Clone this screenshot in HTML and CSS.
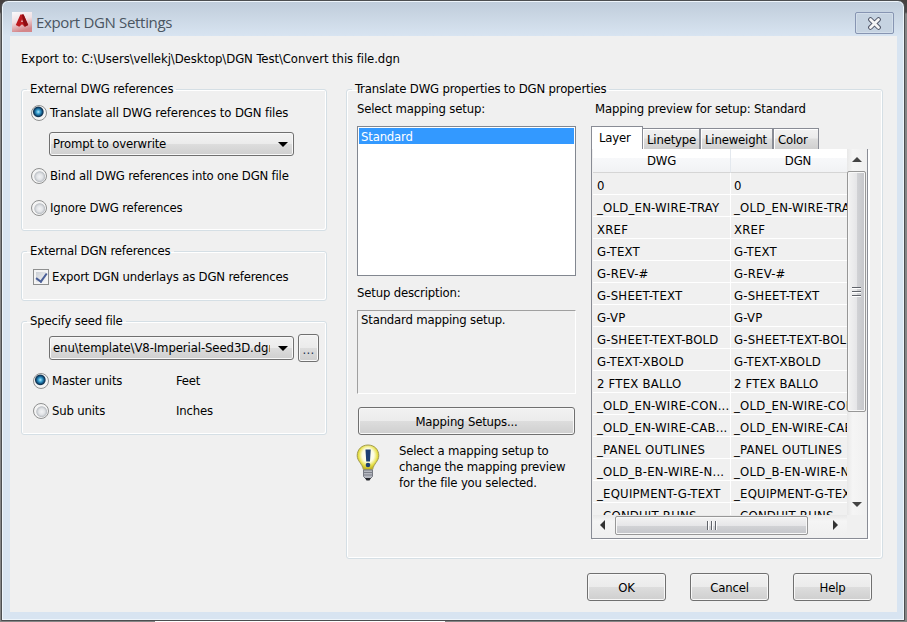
FILE: index.html
```html
<!DOCTYPE html>
<html lang="en">
<head>
    <meta charset="UTF-8">
    <meta name="viewport" content="width=device-width, initial-scale=1.0">
    <title>Export DGN Settings</title>
    <link rel="stylesheet" href="styles.css">
</head>
<body>
    <div class="window">
        <div class="title-bar">
            <svg class="app-icon" width="20" height="20" viewBox="0 0 20 20">
                <defs>
                    <linearGradient id="iconBg" x1="0" y1="0" x2="0.3" y2="1">
                        <stop offset="0" stop-color="#fafafc"/>
                        <stop offset="0.5" stop-color="#f0e0e3"/>
                        <stop offset="1" stop-color="#d4868a"/>
                    </linearGradient>
                </defs>
                <rect width="20" height="20" fill="url(#iconBg)"/>
                <path d="M8.400 2.500h3.200L16.200 13l-3.400 1.800-2.800-2.600-2.800 2.600L3.800 13z" fill="#bd1a1f"/>
                <path d="M10 2.500h1.600L16.200 13l-3.400 1.800-1.600-4.500z" fill="#8d0d12"/>
                <path d="M10 7.300l1 2.700H9z" fill="#e9b5b8"/>
            </svg>
            <h1 class="title">Export DGN Settings</h1>
            <button class="close-btn" type="button" aria-label="Close">
                <svg width="15" height="13" viewBox="0 0 15 13">
                    <path d="M3.500 2.600l8 7.800M11.500 2.600l-8 7.800" stroke="#505668" stroke-width="4.800" stroke-linecap="round"/>
                    <path d="M3.500 2.600l8 7.800M11.500 2.600l-8 7.800" stroke="#f6f6f6" stroke-width="2.800" stroke-linecap="round"/>
                </svg>
            </button>
        </div>

        <form class="client">
            <p class="export-path">Export to: C:\Users\vellekj\Desktop\DGN Test\Convert this file.dgn</p>

            <div class="columns">
                <div class="left">
                    <fieldset class="group dwg-group">
                        <legend>External DWG references</legend>
                        <label class="option"><input type="radio" name="dwg" checked><span>Translate all DWG references to DGN files</span></label>
                        <div class="combo"><span class="combo-text">Prompt to overwrite</span><span class="combo-arrow"></span></div>
                        <label class="option"><input type="radio" name="dwg"><span>Bind all DWG references into one DGN file</span></label>
                        <label class="option"><input type="radio" name="dwg"><span>Ignore DWG references</span></label>
                    </fieldset>

                    <fieldset class="group dgn-group">
                        <legend>External DGN references</legend>
                        <label class="option"><input type="checkbox" checked><span>Export DGN underlays as DGN references</span></label>
                    </fieldset>

                    <fieldset class="group seed-group">
                        <legend>Specify seed file</legend>
                        <div class="seed-row">
                            <div class="combo"><span class="combo-text">enu\template\V8-Imperial-Seed3D.dgn</span><span class="combo-arrow"></span></div>
                            <button class="btn browse" type="button">...</button>
                        </div>
                        <div class="unit-row">
                            <label class="option"><input type="radio" name="units" checked><span>Master units</span></label>
                            <span>Feet</span>
                        </div>
                        <div class="unit-row">
                            <label class="option"><input type="radio" name="units"><span>Sub units</span></label>
                            <span>Inches</span>
                        </div>
                    </fieldset>
                </div>

                <fieldset class="group mapping-group">
                    <legend>Translate DWG properties to DGN properties</legend>
                    <div class="mapping">
                        <div class="setup">
                            <p class="label">Select mapping setup:</p>
                            <ul class="setup-list">
                                <li class="selected">Standard</li>
                            </ul>
                            <p class="label">Setup description:</p>
                            <div class="description">Standard mapping setup.</div>
                            <button class="btn setups-btn" type="button">Mapping Setups...</button>
                            <div class="hint">
                                <svg class="bulb" width="24" height="37" viewBox="0 0 24 37">
                                    <defs>
                                        <radialGradient id="glass" cx="0.5" cy="0.42" r="0.55">
                                            <stop offset="0" stop-color="#ffffff"/>
                                            <stop offset="0.5" stop-color="#fdfde0"/>
                                            <stop offset="0.8" stop-color="#e6df45"/>
                                            <stop offset="1" stop-color="#c2b523"/>
                                        </radialGradient>
                                    </defs>
                                    <path d="M12 1C5.600 1 1.200 5.600 1.200 11.600c0 5.600 5 7.900 6.200 14h9.200c1.200-6.100 6.200-8.400 6.200-14C22.800 5.600 18.400 1 12 1z" fill="url(#glass)" stroke="#a19b52"/>
                                    <path d="M9.500 5.500h5.200L14 17.500h-3.800z" fill="#1d3f73"/>
                                    <circle cx="12" cy="21" r="2.300" fill="#1d3f73"/>
                                    <path d="M7.500 26h9v6.500l-2 2h-5l-2-2z" fill="#b5b8c0" stroke="#777a82"/>
                                    <path d="M7.500 28.500h9M7.500 31h9" stroke="#7c7f88"/>
                                    <path d="M9 34h6l-1.500 2.500h-3z" fill="#25272c"/>
                                </svg>
                                <p>Select a mapping setup to change the mapping preview for the file you selected.</p>
                            </div>
                        </div>

                        <div class="preview">
                            <p class="label">Mapping preview for setup: Standard</p>
                            <div class="tabs">
                                <span class="tab active">Layer</span>
                                <span class="tab linetype">Linetype</span>
                                <span class="tab lineweight">Lineweight</span>
                                <span class="tab color">Color</span>
                            </div>
                            <div class="grid-panel">
                                <div class="table-view">
                                    <table>
                                        <thead>
                                            <tr><th class="first">DWG</th><th>DGN</th></tr>
                                        </thead>
                                        <tbody>
                                            <tr><td>0</td><td>0</td></tr>
                                            <tr><td>_OLD_EN-WIRE-TRAY</td><td>_OLD_EN-WIRE-TRAY</td></tr>
                                            <tr><td>XREF</td><td>XREF</td></tr>
                                            <tr><td>G-TEXT</td><td>G-TEXT</td></tr>
                                            <tr><td>G-REV-#</td><td>G-REV-#</td></tr>
                                            <tr><td>G-SHEET-TEXT</td><td>G-SHEET-TEXT</td></tr>
                                            <tr><td>G-VP</td><td>G-VP</td></tr>
                                            <tr><td>G-SHEET-TEXT-BOLD</td><td>G-SHEET-TEXT-BOLD</td></tr>
                                            <tr><td>G-TEXT-XBOLD</td><td>G-TEXT-XBOLD</td></tr>
                                            <tr><td>2 FTEX BALLO</td><td>2 FTEX BALLO</td></tr>
                                            <tr><td>_OLD_EN-WIRE-CON...</td><td>_OLD_EN-WIRE-CON...</td></tr>
                                            <tr><td>_OLD_EN-WIRE-CAB...</td><td>_OLD_EN-WIRE-CAB...</td></tr>
                                            <tr><td>_PANEL OUTLINES</td><td>_PANEL OUTLINES</td></tr>
                                            <tr><td>_OLD_B-EN-WIRE-N...</td><td>_OLD_B-EN-WIRE-N...</td></tr>
                                            <tr><td>_EQUIPMENT-G-TEXT</td><td>_EQUIPMENT-G-TEXT</td></tr>
                                            <tr><td>_CONDUIT RUNS</td><td>_CONDUIT RUNS</td></tr>
                                        </tbody>
                                    </table>
                                </div>
                                <div class="scroll-v">
                                    <span class="arrow up"></span>
                                    <span class="thumb"><i></i><i></i><i></i></span>
                                    <span class="arrow down"></span>
                                </div>
                                <div class="scroll-h">
                                    <span class="arrow prev"></span>
                                    <span class="thumb"><i></i><i></i><i></i></span>
                                    <span class="arrow next"></span>
                                </div>
                            </div>
                        </div>
                    </div>
                </fieldset>
            </div>

            <div class="actions">
                <button class="btn" type="button">OK</button>
                <button class="btn" type="button">Cancel</button>
                <button class="btn" type="button">Help</button>
            </div>
        </form>
    </div>
    <div class="page-behind"></div>
</body>
</html>
```

FILE: styles.css
```css
* {
    margin: 0;
    padding: 0;
    box-sizing: border-box;
}

body {
    width: 907px;
    height: 622px;
    overflow: hidden;
    padding-left: 1px;
    background: linear-gradient(#45403f 0, #4b4848 12px, #858585 14px, #858585 100%);
    font-family: Tahoma, "DejaVu Sans Condensed", "DejaVu Sans", sans-serif;
    font-size: 13px;
    line-height: 16px;
    letter-spacing: -0.18px;
    color: #000;
}

.window {
    width: 904px;
    height: 621px;
    padding: 0 7px 7px;
    border: 1px solid #4c4e50;
    border-radius: 7px 7px 0 0;
    background: linear-gradient(#bfccda 0, #d8e4f1 35px, #d8e4f1 100%);
    box-shadow: inset 0 0 0 1px #eef5fb;
}

.title-bar {
    display: flex;
    align-items: flex-start;
    height: 35px;
    padding: 11px 3px 0 3px;
}

.title {
    flex: 1;
    margin-left: 4px;
    font-family: "Segoe UI", "Open Sans", "Noto Sans", sans-serif;
    font-size: 15px;
    font-weight: 400;
    line-height: 20px;
    letter-spacing: -0.33px;
    color: #4a5561;
}

.close-btn {
    display: flex;
    align-items: center;
    justify-content: center;
    width: 39px;
    height: 22px;
    border: 1px solid #8795b2;
    border-radius: 2px;
    background: #c6d3e1;
    box-shadow: inset 0 0 0 1px #d3deea;
}

.client {
    height: 576px;
    margin-left: 1px;
    padding: 15px 14px 0 11px;
    background: #f0f0f0;
}

.export-path {
    margin-bottom: 14px;
    letter-spacing: -0.08px;
}

.columns {
    display: flex;
    justify-content: space-between;
}

.left {
    width: 306px;
}

.group {
    display: flow-root;
    min-width: 0;
    border: 1px solid #d5dfe5;
    border-radius: 3px;
    box-shadow: inset 1px 1px 0 #fff, inset -1px -1px 0 #fff;
}

.group legend {
    height: 16px;
    margin-left: -4px;
    padding: 0 3px;
}

.dwg-group {
    height: 150px;
    margin-bottom: 12px;
    padding-left: 9px;
}

.dgn-group {
    height: 58px;
    margin-bottom: 12px;
    padding: 10px 0 0 11px;
}

.seed-group {
    height: 122px;
    padding: 5px 0 0 11px;
}

.dgn-group legend,
.seed-group legend {
    margin-left: -6px;
}

.option {
    display: flex;
    align-items: center;
    gap: 3px;
    height: 16px;
}

.dwg-group .option {
    margin-top: 16px;
}

.dwg-group legend + .option {
    margin-top: 8px;
    letter-spacing: -0.11px;
}

.dwg-group .combo {
    margin: 11px 0 9px 18px;
}

.dwg-group .combo + .option {
    margin-top: 0;
    padding-top: 0;
}

.dwg-group .combo {
    margin-bottom: 12px;
}

input {
    appearance: none;
    width: 16px;
    height: 16px;
}

input[type="radio"] {
    border: 1px solid #8e8f8f;
    border-radius: 50%;
    background: radial-gradient(circle at 55% 55%, #f2f3f5 0, #e2e4e7 3px, #bfc3c8 5px, #f4f4f4 5.800px);
}

input[type="radio"]:checked {
    background: radial-gradient(circle at 45% 42%, #b5e8fb 0, #38a0d0 2px, #0b3f69 4.300px, #163550 4.800px, #f4f4f4 5.800px);
}

input[type="checkbox"] {
    border: 1px solid #8e8f8f;
    background: linear-gradient(135deg, #cbcfd5, #f6f6f6) center / 10px 10px no-repeat #f4f4f4;
    display: flex;
    align-items: center;
    justify-content: center;
}

input[type="checkbox"]::after {
    content: "";
    width: 5px;
    height: 9px;
    margin-top: -2px;
    border: solid #4a5f97;
    border-width: 0 2px 2px 0;
    transform: rotate(36deg);
}

.combo {
    display: flex;
    align-items: center;
    width: 245px;
    height: 24px;
    padding: 0 5px 0 3px;
    border: 1px solid #707070;
    border-radius: 3px;
    background: linear-gradient(#f2f2f2 0, #ebebeb 50%, #dddddd 50%, #cfcfcf 100%);
    box-shadow: inset 0 0 0 1px #f8f8f8;
}

.combo-text {
    width: 217px;
    overflow: hidden;
    white-space: nowrap;
}

.seed-row .combo-text {
    letter-spacing: -0.1px;
}

.combo-arrow {
    margin-left: auto;
    border: 5px solid transparent;
    border-top-color: #000;
    border-bottom: 0;
}

.btn {
    border: 1px solid #707070;
    border-radius: 3px;
    background: linear-gradient(#f2f2f2 0, #ebebeb 50%, #dddddd 50%, #cfcfcf 100%);
    box-shadow: inset 0 0 0 1px #f8f8f8;
    font: inherit;
    letter-spacing: inherit;
}

.seed-row {
    display: flex;
    align-items: center;
    gap: 4px;
    margin-left: 16px;
}

.browse {
    width: 21px;
    height: 28px;
    padding-top: 4px;
    color: #1c3350;
    letter-spacing: 0.3px;
}

.unit-row {
    display: flex;
    margin-top: 11px;
}

.unit-row + .unit-row {
    margin-top: 14px;
}

.unit-row .option {
    width: 143px;
}

.mapping-group {
    width: 537px;
    height: 478px;
    padding: 4px 0 0 10px;
}

.mapping-group legend {
    margin-left: -5px;
}

.mapping {
    display: flex;
}

.setup {
    width: 234px;
}

.setup-list {
    width: 219px;
    height: 150px;
    margin: 9px 0;
    padding: 1px;
    border: 1px solid #828790;
    background: #fff;
    list-style: none;
}

.setup-list .selected {
    height: 16px;
    padding-left: 2px;
    background: #3399ff;
    line-height: 18px;
    color: #fff;
}

.description {
    width: 219px;
    height: 84px;
    margin-top: 9px;
    padding: 1px 3px;
    border: 1px solid;
    border-color: #a0a0a0 #fff #fff #a0a0a0;
}

.setups-btn {
    display: block;
    width: 217px;
    height: 28px;
    margin: 13px 0 8px 1px;
    padding-top: 1px;
}

.hint {
    display: flex;
    gap: 19px;
}

.bulb {
    flex: none;
    margin: 1px 0 0 -1px;
}

.hint p {
    width: 172px;
}

.preview .label {
    margin-left: 4px;
}

.tabs {
    display: flex;
    align-items: flex-end;
    height: 23px;
    margin-top: 9px;
}

.tab {
    height: 21px;
    padding: 3px 0 0 4px;
    border: 1px solid #898c95;
    border-bottom: 0;
    background: linear-gradient(#f2f2f2 0, #ebebeb 45%, #dddddd 50%, #cfcfcf 100%);
    box-shadow: inset 1px 1px 0 #fff;
}

.tab.active {
    width: 52px;
    height: 23px;
    padding-left: 7px;
    background: #fff;
}

.tab.linetype {
    width: 57px;
    border-left: 0;
}

.tab.lineweight {
    width: 73px;
}

.tab.color {
    width: 46px;
}

.grid-panel {
    display: grid;
    grid-template-columns: 254px 20px;
    grid-template-rows: 366px 20px;
    width: 277px;
    height: 390px;
    padding-left: 1px;
    border: 1px solid #898c95;
    border-top: 0;
    box-shadow: 2px 1px 0 #fff;
}

.table-view {
    overflow: hidden;
}

table {
    width: 273px;
    table-layout: fixed;
    border-collapse: separate;
    border-spacing: 0;
}

th {
    height: 24px;
    border-right: 1px solid #e3e8ee;
    border-bottom: 1px solid #d5d5d5;
    background: linear-gradient(#fff 0, #fff 40%, #f7f8fa 40%, #f1f2f4 100%);
    font-weight: 400;
}

th.first {
    width: 138px;
}

td {
    height: 22px;
    padding: 5px 0 0 4px;
    border-right: 1px solid #fff;
    border-bottom: 1px solid #fff;
    line-height: 16px;
    letter-spacing: 0.22px;
    white-space: nowrap;
}

td + td {
    padding-left: 3px;
}

.scroll-v {
    display: flex;
    flex-direction: column;
    align-items: center;
    width: 19px;
    background: linear-gradient(90deg, #e8e8e8, #f5f5f5 30%, #f0f0f0);
}

.thumb {
    display: flex;
    align-items: center;
    justify-content: center;
    gap: 2px;
    border: 1px solid #979797;
    border-radius: 2px;
    box-shadow: inset 0 0 0 1px #f8f8f8;
}

.scroll-v .thumb {
    flex-direction: column;
    width: 19px;
    height: 241px;
    background: linear-gradient(90deg, #f3f3f3 0, #e6e6e8 50%, #d2d3d6 50%, #c4c5c9 100%);
}

.scroll-v .thumb i {
    width: 9px;
    height: 2px;
    border-top: 1px solid #60636a;
    border-bottom: 1px solid #fff;
}

.scroll-h {
    display: flex;
    align-items: center;
    background: linear-gradient(#e8e8e8, #f5f5f5 30%, #f0f0f0);
}

.scroll-h .thumb {
    width: 193px;
    height: 19px;
    background: linear-gradient(#f3f3f3 0, #e6e6e8 50%, #d2d3d6 50%, #c4c5c9 100%);
}

.scroll-h .thumb i {
    width: 2px;
    height: 9px;
    border-left: 1px solid #60636a;
    border-right: 1px solid #fff;
}

.arrow {
    border: 5px solid transparent;
}

.arrow.up {
    margin: 8px 0 9px;
    border-top: 0;
    border-bottom-color: #444;
}

.arrow.down {
    margin-top: 90px;
    border-bottom: 0;
    border-top-color: #444;
}

.arrow.prev {
    margin: 0 10px 0 7px;
    border-left: 0;
    border-right-color: #333;
}

.arrow.next {
    margin-left: 25px;
    border-right: 0;
    border-left-color: #333;
}

.actions {
    display: flex;
    justify-content: flex-end;
    gap: 24px;
    margin-top: 14px;
    padding-right: 11px;
}

.actions .btn {
    width: 79px;
    height: 28px;
    padding-top: 1px;
}

.page-behind {
    width: 290px;
    height: 1px;
    margin-left: 154px;
    background: #fff;
}
```
